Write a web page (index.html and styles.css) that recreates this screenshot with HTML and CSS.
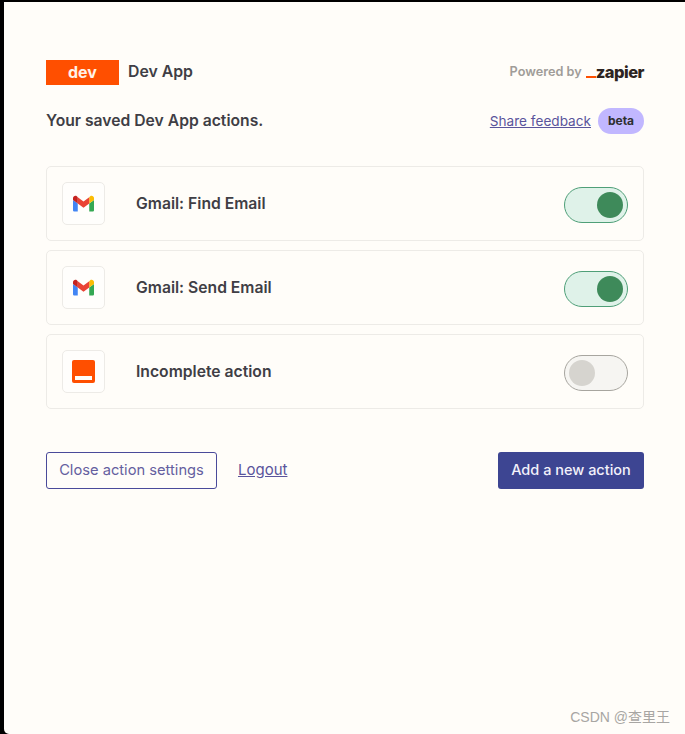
FILE: index.html
```html
<!DOCTYPE html>
<html lang="en">

<head>
  <meta charset="UTF-8">
  <meta name="viewport" content="width=device-width, initial-scale=1.0">
  <title>Dev App actions</title>
  <link rel="stylesheet" href="styles.css">
</head>

<body>
  <div class="panel">
    <header class="top-row">
      <div class="brand">
        <span class="dev-logo">dev</span>
        <span class="app-name">Dev App</span>
      </div>
      <div class="powered">
        <span>Powered by</span>
        <span class="zapier"><i class="zapier-dash"></i>zapier</span>
      </div>
    </header>

    <div class="title-row">
      <h1>Your saved Dev App actions.</h1>
      <div class="feedback">
        <a href="#">Share feedback</a>
        <span class="beta">beta</span>
      </div>
    </div>

    <div class="action-list">
      <div class="action">
        <span class="icon-box">
          <svg class="gmail" viewBox="0 0 22 17" width="21" height="17">
            <path d="M1.5 17H5V8.5L0 4.8V15.500C0 16.300.7 17 1.500 17z" fill="#4285f4" />
            <path d="M17 17h3.500c.8 0 1.500-.7 1.500-1.500V4.800L17 8.500z" fill="#34a853" />
            <path d="M17 2v6.500l5-3.700V2.800C22 .7 19.600-.5 18 .8z" fill="#fbbc04" />
            <path d="M5 8.500V2l6 4.500L17 2v6.500l-6 4.500z" fill="#ea4335" />
            <path d="M0 2.800v2l5 3.700V2L4 .8C2.400-.5 0 .7 0 2.800z" fill="#c5221f" />
          </svg>
        </span>
        <span class="action-name">Gmail: Find Email</span>
        <span class="toggle on"><span class="knob"></span></span>
      </div>
      <div class="action">
        <span class="icon-box">
          <svg class="gmail" viewBox="0 0 22 17" width="21" height="17">
            <path d="M1.5 17H5V8.5L0 4.8V15.500C0 16.300.7 17 1.500 17z" fill="#4285f4" />
            <path d="M17 17h3.500c.8 0 1.500-.7 1.500-1.500V4.800L17 8.500z" fill="#34a853" />
            <path d="M17 2v6.500l5-3.700V2.800C22 .7 19.600-.5 18 .8z" fill="#fbbc04" />
            <path d="M5 8.500V2l6 4.500L17 2v6.500l-6 4.500z" fill="#ea4335" />
            <path d="M0 2.800v2l5 3.700V2L4 .8C2.400-.5 0 .7 0 2.800z" fill="#c5221f" />
          </svg>
        </span>
        <span class="action-name">Gmail: Send Email</span>
        <span class="toggle on"><span class="knob"></span></span>
      </div>
      <div class="action">
        <span class="icon-box">
          <span class="incomplete-icon"><i></i></span>
        </span>
        <span class="action-name">Incomplete action</span>
        <span class="toggle"><span class="knob"></span></span>
      </div>
    </div>

    <div class="bottom-row">
      <div class="bottom-left">
        <button class="btn btn-outline">Close action settings</button>
        <a href="#" class="logout">Logout</a>
      </div>
      <button class="btn btn-primary">Add a new action</button>
    </div>
  </div>

  <div class="watermark">CSDN @查里王</div>
</body>

</html>
```

FILE: styles.css
```css
html,
body {
  height: 100%;
}

body {
  margin: 0;
  padding: 2px 0 0 4px;
  box-sizing: border-box;
  background: #000;
  font-family: Inter, "Liberation Sans", sans-serif;
  color: #403e45;
  overflow: hidden;
}

.panel {
  box-sizing: border-box;
  height: 100%;
  padding: 58px 41px 0 42px;
  background: #fffdf9;
  border-bottom-left-radius: 5px;
}

.top-row,
.title-row,
.bottom-row,
.brand,
.powered,
.feedback,
.bottom-left {
  display: flex;
  align-items: center;
}

.top-row,
.title-row,
.bottom-row {
  justify-content: space-between;
}

.top-row {
  height: 25px;
}

.brand {
  gap: 9px;
}

.dev-logo {
  width: 73px;
  height: 25px;
  background: #ff4f00;
  color: #fff3e8;
  font-size: 16px;
  font-weight: 700;
  line-height: 25px;
  text-align: center;
}

.app-name {
  padding-bottom: 2px;
  font-size: 15.8px;
  font-weight: 600;
}

.powered {
  gap: 4px;
  padding-bottom: 2px;
  font-size: 12.7px;
  font-weight: 600;
  color: #a09c98;
}

.zapier {
  position: relative;
  padding-left: 10px;
  font-size: 16.5px;
  font-weight: 800;
  letter-spacing: -0.5px;
  color: #2d2421;
}

.zapier-dash {
  position: absolute;
  left: 0;
  bottom: 4px;
  width: 10px;
  height: 2px;
  background: #ff4f00;
}

.title-row {
  height: 26px;
  margin-top: 23px;
}

h1 {
  margin: 0;
  padding-bottom: 2px;
  font-size: 15.7px;
  font-weight: 600;
}

.feedback {
  gap: 7px;
}

.feedback a {
  padding-bottom: 1px;
  color: #5a549c;
  font-size: 13.6px;
}

.beta {
  width: 46px;
  height: 26px;
  border-radius: 13px;
  background: #c1b7ff;
  color: #2d2e2e;
  font-size: 12px;
  font-weight: 700;
  line-height: 26px;
  text-align: center;
}

.action-list {
  display: flex;
  flex-direction: column;
  gap: 9px;
  margin-top: 32px;
}

.action {
  box-sizing: border-box;
  display: flex;
  align-items: center;
  height: 75px;
  padding: 0 15px;
  border: 1px solid #edebe7;
  border-radius: 5px;
}

.icon-box {
  box-sizing: border-box;
  display: flex;
  align-items: center;
  justify-content: center;
  flex: none;
  width: 43px;
  height: 43px;
  border: 1px solid #edebe7;
  border-radius: 5px;
  background: #fffefc;
}

.incomplete-icon {
  box-sizing: border-box;
  display: flex;
  align-items: flex-end;
  justify-content: center;
  width: 23px;
  height: 23px;
  padding-bottom: 3px;
  border-radius: 2px;
  background: #ff4f00;
}

.incomplete-icon i {
  display: block;
  width: 17px;
  height: 4px;
  background: #fffdf9;
}

.action-name {
  flex: 1;
  margin-left: 31px;
  padding-bottom: 1px;
  font-size: 15.7px;
  font-weight: 600;
}

.toggle {
  box-sizing: border-box;
  display: flex;
  align-items: center;
  width: 64px;
  height: 36px;
  margin-top: 2px;
  padding: 0 4px;
  border: 1px solid #a7a59f;
  border-radius: 18px;
  background: #f6f5f2;
}

.toggle.on {
  justify-content: flex-end;
  border-color: #4f9f78;
  background: #dff2e9;
}

.knob {
  width: 26px;
  height: 26px;
  border-radius: 50%;
  background: #d6d4cf;
}

.toggle.on .knob {
  background: #3e8a5a;
}

.bottom-row {
  margin-top: 43px;
}

.bottom-left {
  gap: 21px;
  align-items: flex-start;
}

.btn {
  box-sizing: border-box;
  height: 37px;
  padding: 0 0 2px;
  border-radius: 3px;
  font-family: inherit;
  font-size: 14.7px;
  font-weight: 400;
}

.btn-outline {
  width: 171px;
  border: 1px solid #4a4a9a;
  background: #fffdf9;
  color: #655f9f;
}

.btn-primary {
  width: 146px;
  border: none;
  background: #3d4592;
  color: #f3f1fb;
  font-size: 14.5px;
  font-weight: 500;
}

.logout {
  margin-top: 8px;
  color: #5a549c;
  font-size: 15px;
}

.watermark {
  position: absolute;
  right: 15px;
  bottom: 8px;
  font-family: "Liberation Sans", "Noto Sans CJK SC", sans-serif;
  font-size: 14px;
  color: #a8a6a3;
}
```
